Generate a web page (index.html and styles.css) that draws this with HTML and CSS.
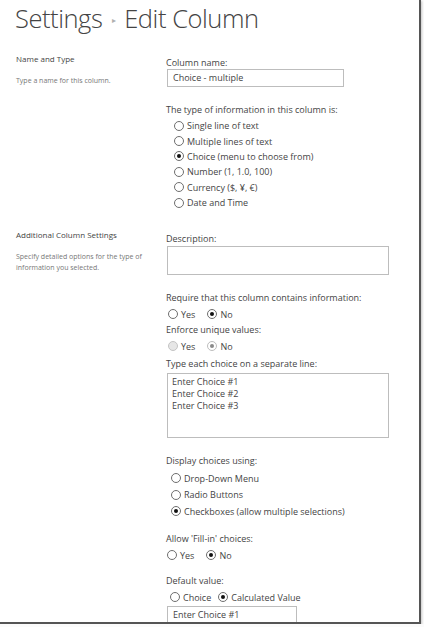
FILE: index.html
```html
<!DOCTYPE html>
<html>
<head>
<meta charset="utf-8">
<link rel="stylesheet" href="styles.css">
</head>
<body>
<div class="page">
  <h1 class="title">Settings <span class="crumb">&#9656;</span> Edit Column</h1>

  <div class="section s1">
    <div class="side">
      <div class="side-head">Name and Type</div>
      <div class="side-desc">Type a name for this column.</div>
    </div>
    <div class="main">
      <div class="lbl">Column name:</div>
      <div class="input name-input">Choice - multiple</div>
      <div class="lbl lbl-gap">The type of information in this column is:</div>
      <div class="list type-list">
        <div class="opt"><span class="radio"></span>Single line of text</div>
        <div class="opt"><span class="radio"></span>Multiple lines of text</div>
        <div class="opt"><span class="radio on"></span>Choice (menu to choose from)</div>
        <div class="opt"><span class="radio"></span>Number (1, 1.0, 100)</div>
        <div class="opt"><span class="radio"></span>Currency ($, ¥, €)</div>
        <div class="opt"><span class="radio"></span>Date and Time</div>
      </div>
    </div>
  </div>

  <div class="section s2">
    <div class="side">
      <div class="side-head">Additional Column Settings</div>
      <div class="side-desc">Specify detailed options for the type of information you selected.</div>
    </div>
    <div class="main">
      <div class="lbl">Description:</div>
      <div class="textarea desc-area"></div>

      <div class="lbl lbl-gap">Require that this column contains information:</div>
      <div class="inline-row r-require">
        <span class="radio"></span><span class="opt-text yes">Yes</span>
        <span class="radio on"></span><span class="opt-text">No</span>
      </div>
      <div class="lbl lbl-tight">Enforce unique values:</div>
      <div class="inline-row r-require">
        <span class="radio dis"></span><span class="opt-text yes">Yes</span>
        <span class="radio on dis"></span><span class="opt-text">No</span>
      </div>
      <div class="lbl lbl-small">Type each choice on a separate line:</div>
      <div class="textarea choices-area">Enter Choice #1<br>Enter Choice #2<br>Enter Choice #3</div>

      <div class="lbl lbl-gap">Display choices using:</div>
      <div class="list display-list">
        <div class="opt"><span class="radio"></span>Drop-Down Menu</div>
        <div class="opt"><span class="radio"></span>Radio Buttons</div>
        <div class="opt"><span class="radio on"></span>Checkboxes (allow multiple selections)</div>
      </div>

      <div class="lbl lbl-mid">Allow 'Fill-in' choices:</div>
      <div class="inline-row r-fill">
        <span class="radio"></span><span class="opt-text yes">Yes</span>
        <span class="radio on"></span><span class="opt-text">No</span>
      </div>

      <div class="lbl lbl-mid2">Default value:</div>
      <div class="inline-row r-default">
        <span class="radio"></span><span class="opt-text choice">Choice</span>
        <span class="radio on"></span><span class="opt-text">Calculated Value</span>
      </div>
      <div class="input default-input">Enter Choice #1</div>
    </div>
  </div>
</div>
</body>
</html>
```

FILE: styles.css
```css
html, body {
  margin: 0;
  padding: 0;
  background: #fbfbfb;
}

.page {
  width: 419px;
  height: 622px;
  background: #ffffff;
  border-right: 2px solid #555555;
  border-bottom: 2px solid #555555;
  box-shadow: 1px 1px 2px #c8c8c8;
  overflow: hidden;
  font-family: "Open Sans", "Liberation Sans", sans-serif;
  color: #444444;
}

.title {
  margin: 0;
  padding-left: 15px;
  font-family: "Open Sans", "Liberation Sans", sans-serif;
  font-weight: 300;
  font-size: 25.5px;
  line-height: 36px;
  letter-spacing: -0.45px;
  color: #444444;
  white-space: nowrap;
}

.crumb {
  font-size: 8px;
  color: #b0b0b0;
  vertical-align: 5px;
  margin: 0 3px;
}

.section {
  display: grid;
  grid-template-columns: 150px 1fr;
  padding-left: 16px;
}

.s1 {
  margin-top: 15px;
  height: 176px;
}

.side-head {
  font-size: 8px;
  line-height: 12px;
  color: #444444;
}

.side-desc {
  margin-top: 9.5px;
  font-size: 7px;
  line-height: 11px;
  color: #777777;
  width: 136px;
}

.main {
  padding-top: 4px;
}

.lbl {
  font-size: 9px;
  line-height: 12px;
  color: #444444;
  white-space: nowrap;
}

.lbl-gap {
  margin-top: 16px;
  line-height: 14px;
}

.lbl-tight {
  margin-top: 1px;
  line-height: 14px;
}

.lbl-small {
  margin-top: 3px;
  line-height: 14px;
}

.lbl-mid {
  margin-top: 12.75px;
  line-height: 14px;
}

.lbl-mid2 {
  margin-top: 11px;
  line-height: 14px;
}

.input {
  box-sizing: border-box;
  border: 1px solid #bdbdbd;
  height: 18px;
  padding-left: 5px;
  font-size: 9px;
  line-height: 16px;
  color: #444444;
  background: #ffffff;
}

.name-input {
  width: 177px;
  margin-left: 1px;
}

.default-input {
  width: 130px;
  margin-left: 1px;
  margin-top: 1px;
}

.textarea {
  box-sizing: border-box;
  border: 1px solid #bdbdbd;
  width: 222px;
  margin-left: 1px;
  background: #ffffff;
}

.desc-area {
  height: 29px;
  margin-top: 1px;
}

.choices-area {
  height: 65px;
  margin-top: 2px;
  padding: 2px 4px;
  font-size: 9px;
  line-height: 12px;
  color: #444444;
}

.list {
  margin-top: 1px;
}

.opt {
  display: flex;
  align-items: center;
  font-size: 9px;
  color: #444444;
  white-space: nowrap;
}

.type-list {
  padding-left: 8px;
}

.type-list .opt {
  height: 15.4px;
}

.display-list {
  margin-top: 1.75px;
  padding-left: 5px;
}

.display-list .opt {
  height: 16.5px;
}

.radio {
  box-sizing: border-box;
  display: inline-flex;
  align-items: center;
  justify-content: center;
  flex: none;
  width: 10px;
  height: 10px;
  border: 1px solid #6e6e6e;
  border-radius: 50%;
  background: #ffffff;
  margin-right: 3px;
}

.radio.on::after {
  content: "";
  width: 4px;
  height: 4px;
  border-radius: 50%;
  background: #111111;
}

.radio.dis {
  border-color: #c4c4c4;
  background: #e6e6e6;
}

.radio.on.dis {
  background: #ffffff;
  border-color: #bdbdbd;
}

.radio.on.dis::after {
  background: #8a8a8a;
}

.inline-row {
  display: flex;
  align-items: center;
  height: 16px;
  margin-top: 1px;
  padding-left: 2px;
  font-size: 9px;
  color: #444444;
  white-space: nowrap;
}

.opt-text.yes {
  margin-right: 12px;
}

.opt-text.choice {
  margin-right: 7px;
}

.r-default {
  padding-left: 4px;
}

.r-fill {
  padding-left: 1px;
}
```
